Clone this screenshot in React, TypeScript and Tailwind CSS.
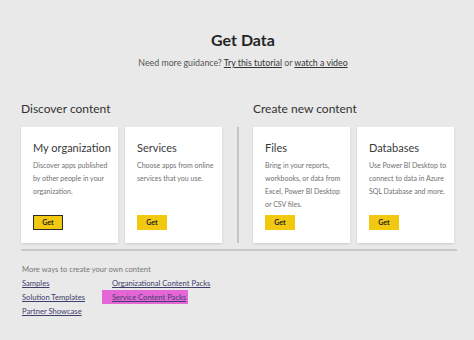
const cards = {
  discover: [
    {
      title: "My organization",
      desc: "Discover apps published by other people in your organization.",
      focused: true,
    },
    {
      title: "Services",
      desc: "Choose apps from online services that you use.",
      focused: false,
    },
  ],
  create: [
    {
      title: "Files",
      desc: "Bring in your reports, workbooks, or data from Excel, Power BI Desktop or CSV files.",
      focused: false,
    },
    {
      title: "Databases",
      desc: "Use Power BI Desktop to connect to data in Azure SQL Database and more.",
      focused: false,
    },
  ],
};

type CardData = { title: string; desc: string; focused: boolean };

function Card({ card }: { card: CardData }) {
  return (
    <div className="flex h-[116px] w-[97px] flex-col bg-white pb-[13px] pl-[12px] pr-[3px] pt-[13px] shadow-[0_1px_2px_rgba(0,0,0,0.12)]">
      <h3 className="whitespace-nowrap text-[11px] leading-[15px] text-[#3a3a3a]">{card.title}</h3>
      <p className="mt-[4px] text-[7px] leading-[13px] text-[#707070]">{card.desc}</p>
      <button
        className={`mt-auto h-[15px] w-[30px] bg-[#f2c811] text-[7px] font-bold leading-none text-[#222] ${
          card.focused ? "border-[1.5px] border-[#2a2a2a]" : ""
        }`}
      >
        Get
      </button>
    </div>
  );
}

export default function App() {
  return (
    <div className="h-[340px] w-[474px] overflow-hidden bg-[#e9e9e9] font-['Lato',sans-serif]">
      <div className="pl-[12px] pt-[29px] text-center">
        <h1 className="text-[16px] font-bold leading-[22px] text-[#252525]">Get Data</h1>
        <p className="mt-[6px] text-[8.8px] leading-[12px] text-[#555]">
          Need more guidance?{" "}
          <span className="text-[#333] underline">Try this tutorial</span> or{" "}
          <span className="text-[#333] underline">watch a video</span>
        </p>
      </div>

      <div className="mt-[31px] flex pl-[21px]">
        <div className="w-[202px]">
          <h2 className="text-[12px] leading-[18px] text-[#333]">Discover content</h2>
          <div className="mt-[9px] flex gap-[7px]">
            {cards.discover.map((c) => (
              <Card key={c.title} card={c} />
            ))}
          </div>
        </div>
        <div className="mx-[14px] mt-[27px] h-[116px] w-[2px] bg-[#c4c4c4]" />
        <div className="w-[202px]">
          <h2 className="text-[12px] leading-[18px] text-[#333]">Create new content</h2>
          <div className="mt-[9px] flex gap-[7px]">
            {cards.create.map((c) => (
              <Card key={c.title} card={c} />
            ))}
          </div>
        </div>
      </div>

      <div className="mx-[21px] mt-[6px] h-[2px] w-[436px] bg-[#c8c8c8]" />

      <div className="whitespace-nowrap pl-[22px] pt-[11px] text-[7.6px] leading-[14px]">
        <p className="text-[#777]">More ways to create your own content</p>
        <div className="flex">
          <div className="flex w-[80px] flex-col text-[#3e3e6e] underline">
            <span>Samples</span>
            <span>Solution Templates</span>
            <span>Partner Showcase</span>
          </div>
          <div className="flex flex-col text-[#3e3e6e] underline">
            <span className="pl-[10px]">Organizational Content Packs</span>
            <span className="w-[86px] bg-[#e567d6] pl-[10px]">Service Content Packs</span>
          </div>
        </div>
      </div>
    </div>
  );
}
